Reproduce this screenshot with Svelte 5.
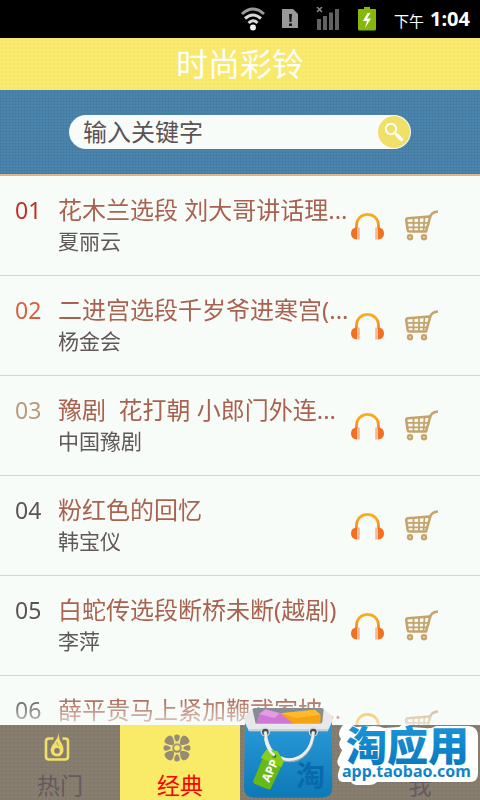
<script>
	const songs = [
		{ title: '花木兰选段 刘大哥讲话理...', artist: '夏丽云', tone: 'first' },
		{ title: '二进宫选段千岁爷进寒宫(...', artist: '杨金会', tone: 'second' },
		{ title: '豫剧  花打朝 小郎门外连...', artist: '中国豫剧', tone: 'third' },
		{ title: '粉红色的回忆', artist: '韩宝仪', tone: '' },
		{ title: '白蛇传选段断桥未断(越剧)', artist: '李萍', tone: '' },
		{ title: '薛平贵马上紧加鞭武家坡...', artist: '', tone: '' }
	];

	const petals = [0, 45, 90, 135, 180, 225, 270, 315];

	let keyword = $state('');
	let activeTab = $state('classic');

	function search(event) {
		event.preventDefault();
	}
</script>

<div class="page">
	<div class="status-bar">
		<svg width="26" height="24" viewBox="0 0 26 24" fill="none" stroke="#d8d8d8" stroke-width="3">
			<path d="M2 7Q13 -3 24 7" stroke="#999" />
			<path d="M5 11.500Q13 4.500 21 11.500" />
			<path d="M8.500 16Q13 11.500 17.500 16" />
			<circle cx="13" cy="20.500" r="3" fill="#eee" stroke="none" />
		</svg>
		<svg class="sd" width="16" height="24" viewBox="0 0 16 24">
			<path d="M0 2h11l5 5v14H0z" fill="#999" />
			<path d="M7 7h3l-.5 8h-2zM7 16.500h3v2.500H7z" fill="#161616" />
		</svg>
		<svg class="signal" width="24" height="24" viewBox="0 0 24 24">
			<path d="M1 12h4v11H1zM7 9h4v14H7zM13 5.500h4v17.500h-4zM19 2h4v21h-4z" fill="#626262" />
			<path d="M1 0l5 5M6 0L1 5" stroke="#8a8a8a" stroke-width="1.500" />
		</svg>
		<svg class="battery" width="18" height="24" viewBox="0 0 18 24">
			<path d="M6 0h6v2h5q1 0 1 1v19q0 1.500-1.500 1.500h-15Q0 23.500 0 22V3q0-1 1-1h5z" fill="#86b80b" />
			<path d="M9.500 6L5 14h4l-2 7 6-9.500H9L12.500 6z" fill="#fff" />
		</svg>
		<span class="period">下午</span>
		<span class="time">1:04</span>
	</div>

	<header>
		<h1>时尚彩铃</h1>
	</header>

	<form class="search-area" onsubmit={search}>
		<div class="search-box">
			<input type="text" bind:value={keyword} placeholder="输入关键字" aria-label="输入关键字" />
			<button type="submit" aria-label="搜索">
				<svg width="20" height="20" viewBox="0 0 20 20" fill="none" stroke="#fbfdf6">
					<circle cx="7" cy="7" r="5.200" stroke-width="2" />
					<path d="M11 11l2 2" stroke-width="2" />
					<path d="M13 13l4.500 4.500" stroke-width="3.500" stroke-linecap="round" />
				</svg>
			</button>
		</div>
	</form>

	<ul class="songs">
		{#each songs as song, i}
			<li>
				<span class="number {song.tone}">0{i + 1}</span>
				<div class="info">
					<h2>{song.title}</h2>
					<p>{song.artist}</p>
				</div>
				<button type="button" class="action" aria-label="试听">
					<svg width="33" height="32" viewBox="0 0 33 32">
						<defs>
							<linearGradient id="cup{i}" x1="0" y1="0" x2="0" y2="1">
								<stop offset="0" stop-color="#fbb01a" />
								<stop offset="1" stop-color="#f5871f" />
							</linearGradient>
						</defs>
						<path d="M5.500 20V17C5.500 1.500 27.500 1.500 27.500 17V20" fill="none" stroke="url(#cup{i})" stroke-width="2.800" />
						<path d="M6 18.500Q0 18.500 0 24.500Q0 30 6 30.500zM27 18.500Q33 18.500 33 24.500Q33 30 27 30.500z" fill="#f36f21" />
						<path d="M7.500 18.500v12M25.500 18.500v12" stroke="#f8b791" stroke-width="2.600" />
					</svg>
				</button>
				<button type="button" class="action" aria-label="购买">
					<svg width="33" height="32" viewBox="0 0 33 32" fill="none" stroke="#c5a46c">
						<path d="M33 2.500Q27 3 25.500 7L21 22.500H4.500Q3 22.500 2.700 21L1.300 11.500Q1 9.500 3 9.300L24.500 7.500" stroke-width="2.600" stroke-linejoin="round" />
						<path d="M2 13.800h21M3 18.300h19M8.500 9v13M14 9V22M19.500 8.500l-1 14" stroke-width="1.800" />
						<circle cx="5" cy="28.300" r="2" stroke-width="2.400" />
						<circle cx="19" cy="28.300" r="2" stroke-width="2.400" />
					</svg>
				</button>
			</li>
		{/each}
	</ul>

	<nav>
		<button type="button" class:active={activeTab === 'hot'} onclick={() => (activeTab = 'hot')}>
			<svg width="36" height="30" viewBox="0 0 36 30">
				<path d="M11.500 5.500H7Q4 5.500 4 8.500V23.500Q4 26.500 7 26.500H23Q26 26.500 26 23.500V8.500Q26 5.500 23 5.500H20.500" fill="none" stroke="#f0e066" stroke-width="2.600" />
				<path d="M17 0Q16.500 6 19.500 10Q22 14 21.500 18Q20 23.500 15 23.500Q9 23 8.500 17Q9 13 12 10Q16 5 17 0z" fill="#f0e066" />
				<circle cx="15" cy="17.800" r="2.800" fill="#857c6d" />
				<path d="M15 9Q14.500 12 17 13" fill="none" stroke="#a39966" />
			</svg>
			<span>热门</span>
		</button>
		<button type="button" class:active={activeTab === 'classic'} onclick={() => (activeTab = 'classic')}>
			<svg width="36" height="30" viewBox="0 0 36 30">
				<defs>
					<linearGradient id="petal" gradientUnits="userSpaceOnUse" x1="0" y1="2" x2="0" y2="28">
						<stop offset="0" stop-color="#bbb196" />
						<stop offset="1" stop-color="#80745f" />
					</linearGradient>
				</defs>
				<g fill="#968b74">
					{#each petals as angle}
						{#if angle % 90 === 0}
							<path d="M14 8.500Q11.500 4.500 12.500 2.500Q15 .5 17.500 2.500Q18.500 4.500 16 8.500z" transform="rotate({angle} 15 15)" />
						{:else}
							<path d="M14 10Q9.500 5 10.500 2Q12 0 15 0Q18 0 19.500 2Q20.500 5 16 10z" transform="rotate({angle} 15 15)" />
						{/if}
					{/each}
				</g>
				<circle cx="15" cy="15" r="3.800" fill="none" stroke="url(#petal)" stroke-width="2" />
			</svg>
			<span>经典</span>
		</button>
		<button type="button" aria-label="应用" class:active={activeTab === 'apps'} onclick={() => (activeTab = 'apps')}></button>
		<button type="button" class:active={activeTab === 'me'} onclick={() => (activeTab = 'me')}>
			<svg width="36" height="30" viewBox="0 0 36 30"></svg>
			<span>我</span>
		</button>
	</nav>

	<svg class="watermark" width="245" height="110" viewBox="0 0 245 110">
		<defs>
			<linearGradient id="bag" x1="0" y1="0" x2="0" y2="1">
				<stop offset="0" stop-color="#2b9bda" />
				<stop offset="1" stop-color="#0d79b7" />
			</linearGradient>
			<linearGradient id="logo" x1="0" y1="0" x2="0" y2="1">
				<stop offset="0" stop-color="#1c9bdc" />
				<stop offset="1" stop-color="#0874ba" />
			</linearGradient>
		</defs>
		<g transform="scale(.3333)">
			<path d="M52 58Q54 54 62 54H258Q266 54 268 60L278 104H44z" fill="#858d93" />
			<path d="M64 99L72 72L92 58L135 70L184 100V108H64z" fill="#cf77d4" />
			<path d="M72 72L92 58L135 70L118 84z" fill="#e29be4" />
			<path d="M136 70L240 59L257 74L256 108H184z" fill="#f6a414" />
			<path d="M136 70L240 59L257 74L184 84z" fill="#ffb92d" />
			<path d="M30 92L42 112H278L291 90L292 294Q292 323 260 323H60Q27 323 27 292z" fill="url(#bag)" />
			<path d="M52 56L26 82L30 98L42 124H278L290 98L293 80L266 56L262 96Q262 101 254 101H66Q60 101 61 96z" fill="#e6e8e9" />
			<path d="M42 120H278" stroke="#bfc7cb" stroke-width="4" />
			<circle cx="91" cy="126" r="12" fill="#454d53" stroke="#d5dadd" stroke-width="4" />
			<circle cx="235" cy="126" r="12" fill="#454d53" stroke="#d5dadd" stroke-width="4" />
			<path d="M91 126C95 240 230 240 235 126" fill="none" stroke="#9ba7af" stroke-width="11" />
			<path d="M91 124C95 237 230 237 235 124" fill="none" stroke="#eceeef" stroke-width="8" />
			<path d="M94 179L127 183L146 215L107 296Q104 300 99 298L58 281Q53 278 55 272z" fill="#69b914" />
			<path d="M94 179L127 183L146 215L139 231L77 203z" fill="#85cf18" />
			<circle cx="118" cy="198" r="6" fill="#3f6c2b" />
			<path d="M91 145Q96 180 119 197" fill="none" stroke="#eceeef" stroke-width="8" />
		</g>
		<text class="bag-mark" x="61" y="97">淘</text>
		<text class="tag-mark" x="34" y="93" transform="rotate(-65 34 93)">APP</text>
		<path
			d="M106 38Q108 33 114 34Q119 35 121 37L139 36Q145 36 149 38L164 37Q170 31 176 37L190 38Q196 39 201 36L234 36Q243 37 243 46V83Q243 92 235 92H150Q146 92 142 92Q139 95 134 95H122Q118 95 116 92H108Q102 91 103 84L105 77Q101 74 103 69L107 60Q102 55 106 49Q102 44 106 38z"
			fill="#fff"
		/>
		<text class="logo-name" x="111" y="71">淘应用</text>
		<text class="logo-url" x="107" y="87">app.taobao.com</text>
	</svg>
</div>

<style>
	:global(body) {
		margin: 0;
	}

	.page {
		position: relative;
		display: flex;
		flex-direction: column;
		height: 100vh;
		overflow: hidden;
		background: #f8fcf9;
		font-family: 'Noto Sans', 'Noto Sans CJK SC', sans-serif;
	}

	button {
		padding: 0;
		border: none;
		background: none;
		font: inherit;
		cursor: pointer;
	}

	svg {
		display: block;
		flex: none;
	}

	.status-bar {
		display: flex;
		align-items: center;
		justify-content: flex-end;
		gap: 16px;
		height: 38px;
		padding-right: 10px;
		background: #000;
		color: #fff;
	}

	.signal,
	.battery {
		margin-left: 2px;
	}

	.period {
		margin-left: 2px;
		padding-top: 4px;
		font-size: 15px;
		line-height: 24px;
	}

	.time {
		margin-left: -10px;
		font-size: 20px;
		font-weight: 700;
		line-height: 24px;
	}

	header {
		background: radial-gradient(circle, #f5e56c 1px, transparent 1px) 0 0 / 4px 4px, #f9ea6d;
	}

	h1 {
		margin: 0;
		color: #fbfefa;
		font-size: 32px;
		font-weight: 400;
		line-height: 52px;
		text-align: center;
	}

	.search-area {
		padding: 25px 69px;
		border-bottom: 2px solid #dcb48d;
		background:
			repeating-linear-gradient(90deg, rgba(20, 60, 90, 0.08) 0 1px, transparent 1px 3px),
			repeating-linear-gradient(0deg, rgba(20, 60, 90, 0.08) 0 1px, transparent 1px 3px),
			#4b84ad;
	}

	.search-box {
		display: flex;
		align-items: center;
		height: 34px;
		padding: 0 1px 0 14px;
		border-radius: 17px;
		background: #f8fcf9;
	}

	.search-box input {
		flex: 1;
		min-width: 0;
		padding: 0;
		border: none;
		outline: none;
		background: none;
		color: #5c5255;
		font: inherit;
		font-size: 24px;
		line-height: 34px;
	}

	.search-box input::placeholder {
		color: #5c5255;
		opacity: 1;
	}

	.search-box button {
		display: flex;
		align-items: center;
		justify-content: center;
		width: 32px;
		height: 32px;
		border-radius: 50%;
		background: #f0e067;
	}

	.songs {
		flex: 1;
		min-height: 0;
		margin: 0;
		padding: 0;
		list-style: none;
		overflow-y: auto;
		scrollbar-width: none;
		mask-image: linear-gradient(#000 calc(100% - 28px), rgba(0, 0, 0, 0.3));
	}

	.songs li {
		display: flex;
		box-sizing: border-box;
		height: 100px;
		padding: 18px 42px 0 15px;
		border-bottom: 1px solid #dcd3ce;
	}

	.number {
		width: 43px;
		color: #5c5356;
		font-size: 23px;
		line-height: 32px;
	}

	.first {
		color: #c0301f;
	}

	.second {
		color: #d8603f;
	}

	.third {
		color: #b99a78;
	}

	.info {
		flex: 1;
		min-width: 0;
	}

	h2 {
		margin: 0;
		color: #a9624f;
		font-size: 24px;
		font-weight: 400;
		line-height: 32px;
		white-space: pre;
	}

	.info p {
		margin: 0;
		color: #5f5759;
		font-size: 21px;
		line-height: 30px;
	}

	.action {
		align-self: flex-start;
		margin-top: 15px;
	}

	.action + .action {
		margin-left: 21px;
	}

	nav {
		display: grid;
		grid-template-columns: repeat(4, 1fr);
		height: 75px;
		background: radial-gradient(circle, #81786a 1px, transparent 1px) 0 0 / 4px 4px, #887e6f;
	}

	nav button {
		display: flex;
		flex-direction: column;
		align-items: center;
		gap: 6px;
		padding: 8px 0 0;
		color: #655a62;
		font-size: 23px;
		line-height: 32px;
	}

	nav .active {
		background: #f9ea67;
		color: #f00;
	}

	.watermark {
		position: absolute;
		right: 0;
		bottom: 0;
		pointer-events: none;
	}

	.bag-mark {
		fill: #086aab;
		font-size: 29px;
		font-weight: 700;
	}

	.tag-mark {
		fill: #fff;
		font-size: 12px;
		font-weight: 700;
	}

	.logo-name,
	.logo-url {
		fill: url(#logo);
	}

	.logo-name {
		font-size: 41px;
		font-weight: 900;
	}

	.logo-url {
		font-size: 16px;
		font-weight: 700;
	}
</style>
